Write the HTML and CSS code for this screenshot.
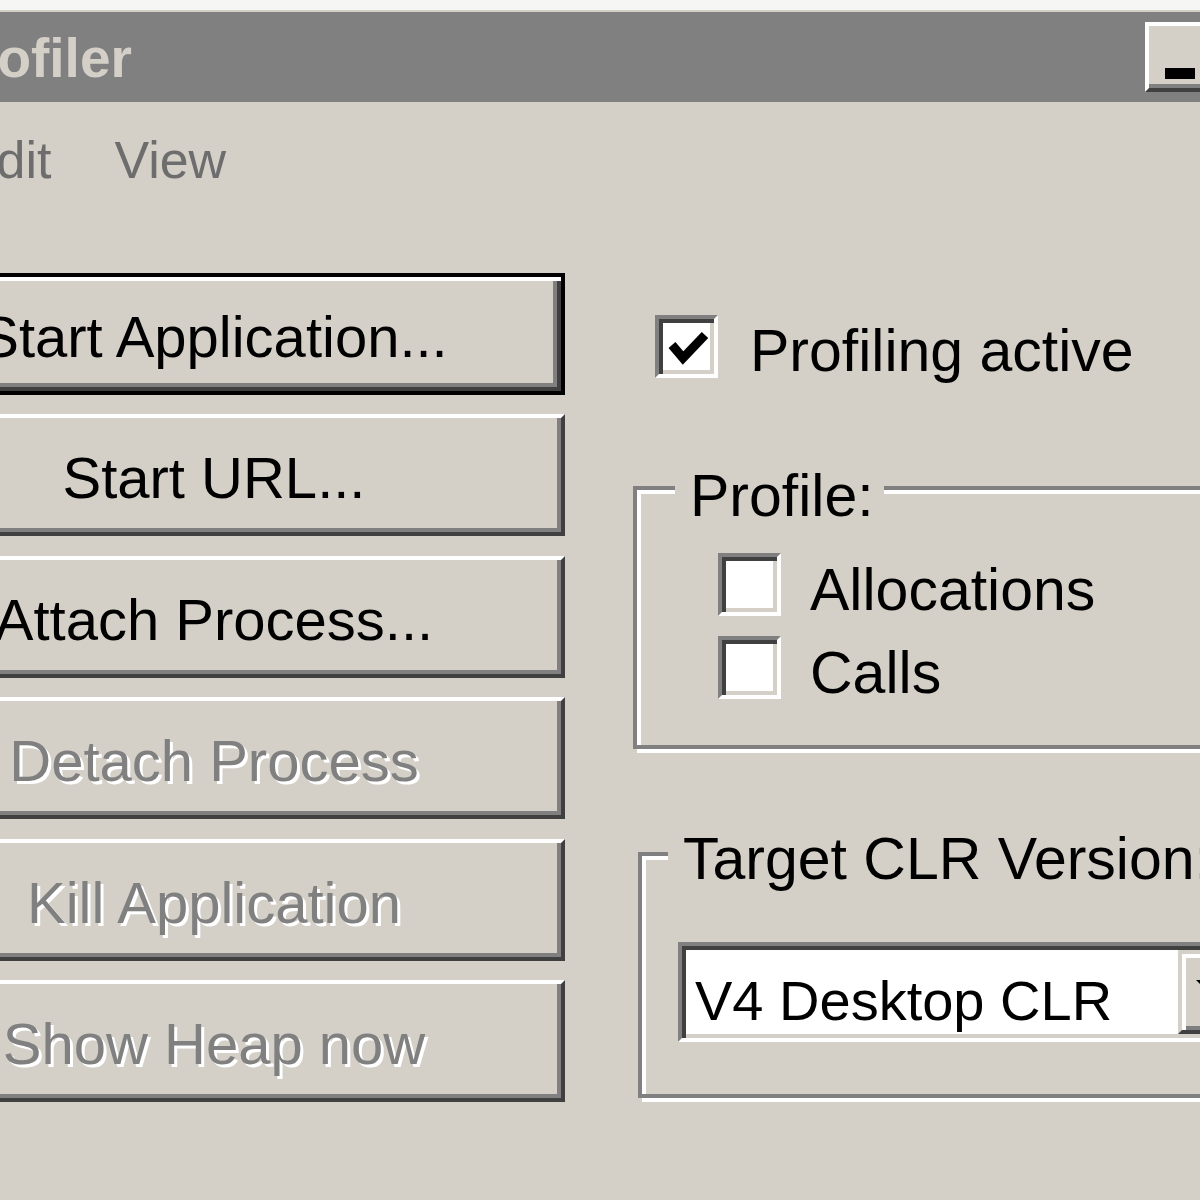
FILE: index.html
```html
<!DOCTYPE html>
<html lang="en">
<head>
<meta charset="utf-8">
<title>CLR Profiler</title>
<link rel="stylesheet" href="styles.css">
</head>
<body>
<div class="window">
  <div class="top-edge"></div>
  <div class="titlebar">
    <span class="title">CLR Profiler</span>
    <span class="spacer"></span>
    <div class="cap-btn"><span class="min-glyph"></span></div>
  </div>
  <div class="menubar">
    <span class="menu-item">File</span>
    <span class="menu-item">Edit</span>
    <span class="menu-item">View</span>
  </div>
  <div class="main">
    <div class="actions">
      <button class="btn default">Start Application...</button>
      <button class="btn">Start URL...</button>
      <button class="btn">Attach Process...</button>
      <button class="btn disabled">Detach Process</button>
      <button class="btn disabled">Kill Application</button>
      <button class="btn disabled">Show Heap now</button>
    </div>
    <div class="options">
      <div class="check-row top-check">
        <span class="cb"><svg class="tick" viewBox="0 0 40 38" width="40" height="38"><path d="M4 17 L15 30 L37 7" fill="none" stroke="#000" stroke-width="9" stroke-linejoin="miter"/></svg></span>
        <span class="cb-label">Profiling active</span>
      </div>
      <div class="group profile-group">
        <span class="group-label">Profile:</span>
        <div class="check-list">
          <div class="check-row"><span class="cb"></span><span class="cb-label">Allocations</span></div>
          <div class="check-row"><span class="cb"></span><span class="cb-label">Calls</span></div>
        </div>
      </div>
      <div class="group clr-group">
        <span class="group-label">Target CLR Version:</span>
        <div class="combo">
          <span class="combo-text">V4 Desktop CLR</span>
          <span class="combo-btn"><svg viewBox="0 0 35 18" width="35" height="18"><polygon points="0,0 35,0 17.5,18" fill="#000"/></svg></span>
        </div>
      </div>
    </div>
  </div>
</div>
</body>
</html>
```
FILE: styles.css
```css
html, body {
  margin: 0;
  padding: 0;
  width: 1200px;
  height: 1200px;
  overflow: hidden;
  background: #d4d0c8;
}
body {
  font-family: "Liberation Sans", Arial, sans-serif;
  color: #000;
}
.window {
  width: 1200px;
  height: 1200px;
  background: #d4d0c8;
}
.top-edge {
  height: 10px;
  background: #f6f6f4;
  border-bottom: 2px solid #d4d0c8;
}
.titlebar {
  height: 90px;
  background: #808080;
  display: flex;
  align-items: center;
}
.title {
  margin-left: -189px;
  padding-top: 2px;
  font-weight: bold;
  font-size: 55px;
  line-height: 55px;
  color: #d4d0c8;
  white-space: nowrap;
}
.spacer {
  flex: 1;
}
.cap-btn {
  width: 75px;
  height: 70px;
  margin-right: -20px;
  box-sizing: border-box;
  flex-shrink: 0;
  background: #d4d0c8;
  border: 4px solid;
  border-color: #fff #404040 #404040 #fff;
  box-shadow: inset -4px -4px 0 #808080;
  display: flex;
  align-items: flex-start;
}
.min-glyph {
  display: block;
  width: 30px;
  height: 11px;
  margin-left: 16px;
  margin-top: 42px;
  background: #000;
}
.menubar {
  height: 113px;
  box-sizing: border-box;
  padding-top: 32px;
  margin-left: -185px;
  display: flex;
  gap: 63px;
  font-size: 52px;
  line-height: 52px;
  color: #6d6d6d;
}
.main {
  display: flex;
  align-items: flex-start;
}
.actions {
  margin-left: -137px;
  width: 702px;
  padding-top: 58px;
  display: flex;
  flex-direction: column;
  gap: 19.4px;
  flex-shrink: 0;
}
.btn {
  width: 702px;
  height: 122px;
  box-sizing: border-box;
  margin: 0;
  padding: 6px 0 0;
  font-family: "Liberation Sans", Arial, sans-serif;
  font-size: 58px;
  line-height: 58px;
  color: #000;
  background: #d4d0c8;
  border: 4px solid;
  border-color: #fff #404040 #404040 #fff;
  box-shadow: inset -4px -4px 0 #808080;
  text-align: center;
  white-space: nowrap;
}
.btn.default {
  border: 4px solid #000;
  box-shadow: inset 4px 4px 0 #fff, inset -4px -4px 0 #404040, inset -8px -8px 0 #808080;
}
.btn.disabled {
  color: #808080;
  text-shadow: 3px 3px 0 #fff;
}
.options {
  margin-left: 68px;
  padding-top: 99px;
  display: flex;
  flex-direction: column;
  align-items: flex-start;
  flex-shrink: 0;
  font-size: 59px;
  line-height: 59px;
}
.check-row {
  display: flex;
  align-items: center;
  gap: 29px;
  height: 63px;
}
.top-check {
  margin-left: 22px;
  height: 64px;
  gap: 32px;
}
.cb {
  width: 63px;
  height: 63px;
  box-sizing: border-box;
  flex-shrink: 0;
  background: #fff;
  border: 4px solid;
  border-color: #808080 #fff #fff #808080;
  box-shadow: inset 4px 4px 0 #404040, inset -4px -4px 0 #d4d0c8;
  display: flex;
  align-items: center;
  justify-content: center;
}
.tick {
  margin-left: 2px;
  margin-top: 2px;
}
.cb-label {
  padding-top: 11px;
  white-space: nowrap;
}
.group {
  position: relative;
  box-sizing: border-box;
  width: 700px;
  border: 4px solid #808080;
  box-shadow: inset 4px 4px 0 #fff, 4px 4px 0 #fff;
}
.group-label {
  position: absolute;
  background: #d4d0c8;
  padding: 0 10px 0 15px;
  white-space: nowrap;
}
.profile-group {
  margin-top: 108px;
  height: 263px;
  padding: 63px 0 0 81px;
}
.profile-group .group-label {
  left: 38px;
  top: -23px;
}
.check-list {
  display: flex;
  flex-direction: column;
  gap: 20px;
}
.clr-group {
  margin-top: 103px;
  margin-left: 5px;
  height: 246px;
  padding: 86px 0 0 36px;
}
.clr-group .group-label {
  left: 26px;
  top: -26px;
}
.combo {
  width: 593px;
  height: 100px;
  box-sizing: border-box;
  padding: 4px;
  background: #fff;
  border: 4px solid;
  border-color: #808080 #fff #fff #808080;
  box-shadow: inset 4px 4px 0 #404040, inset -4px -4px 0 #d4d0c8;
  display: flex;
}
.combo-text {
  flex: 1;
  padding: 21px 0 0 9px;
  font-size: 56px;
  white-space: nowrap;
}
.combo-btn {
  width: 85px;
  box-sizing: border-box;
  background: #d4d0c8;
  border: 4px solid;
  border-color: #d4d0c8 #404040 #404040 #d4d0c8;
  box-shadow: inset 4px 4px 0 #fff, inset -4px -4px 0 #808080;
  display: flex;
  align-items: center;
  padding: 0 0 6px 14px;
}
```
